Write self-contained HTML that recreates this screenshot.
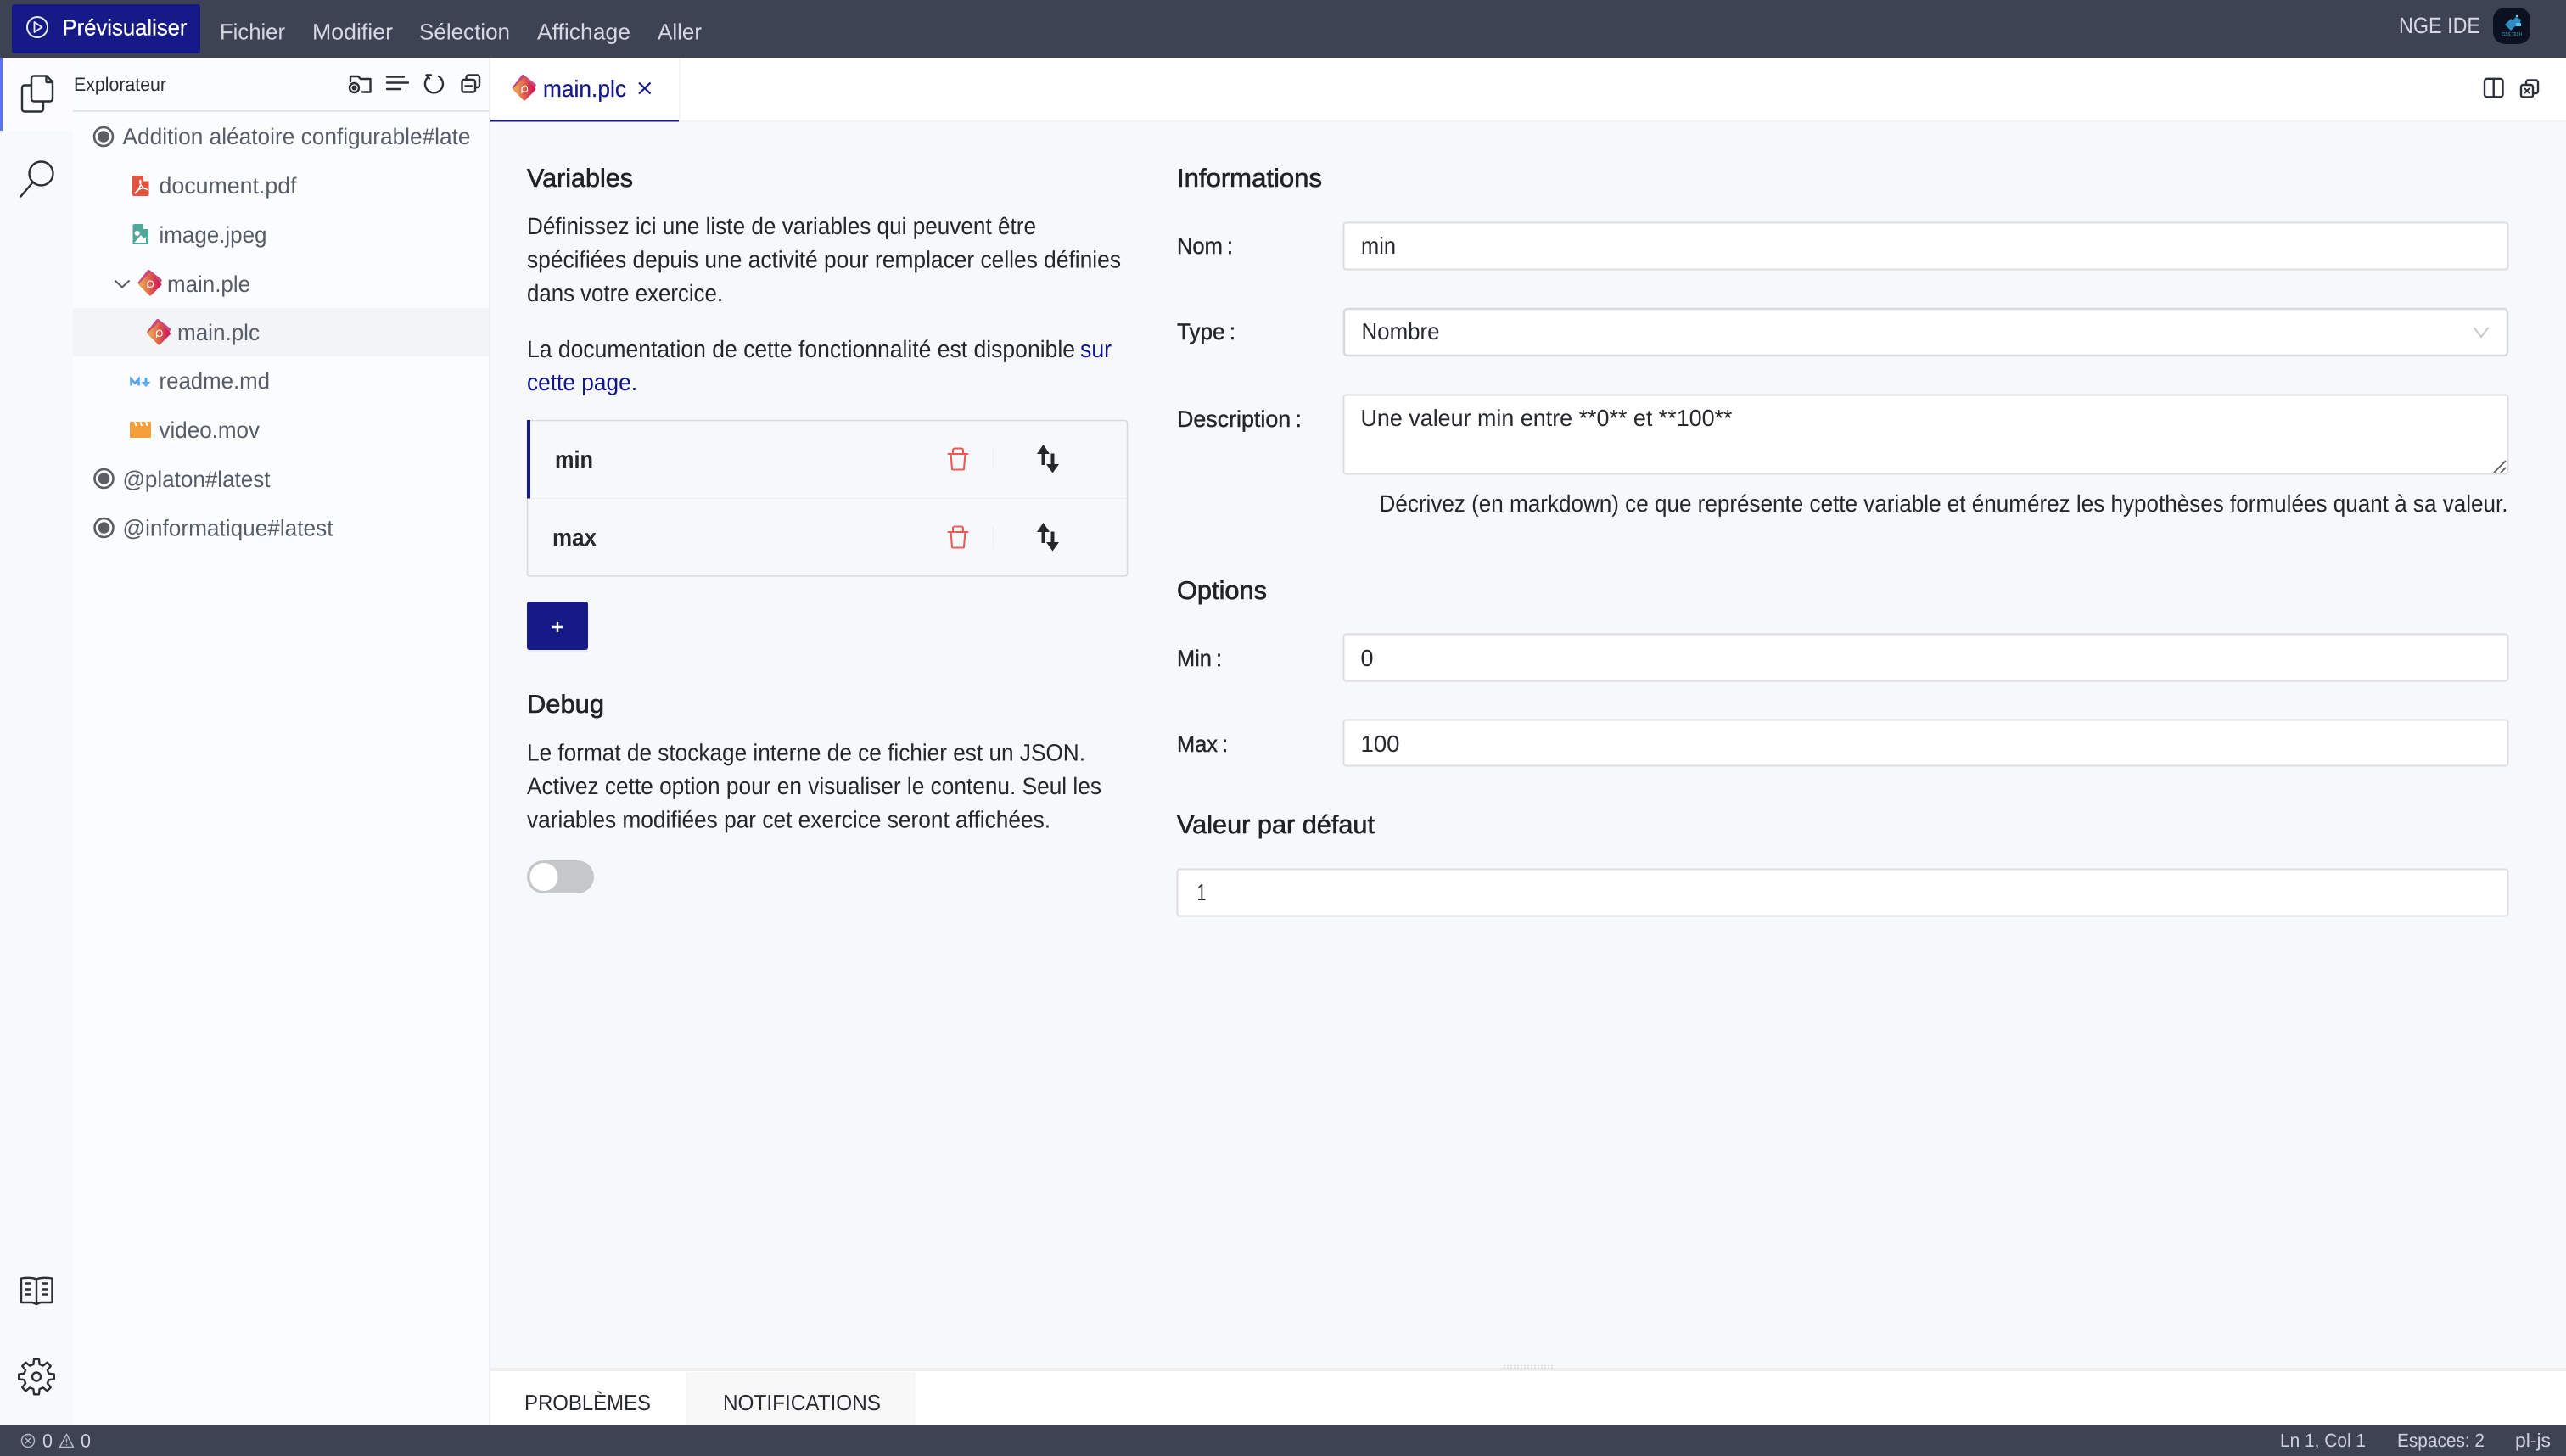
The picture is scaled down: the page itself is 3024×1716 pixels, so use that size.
<!DOCTYPE html>
<html lang="fr">
<head>
<meta charset="utf-8">
<title>NGE IDE</title>
<style>
html,body{margin:0;padding:0;width:3024px;height:1716px;overflow:hidden;background:#f7f8fa}
svg{display:block;position:absolute;left:0;top:0}
text{font-family:"Liberation Sans",sans-serif;text-rendering:geometricPrecision}
.p{font-size:28px;fill:#24272b}
.h{font-size:30px;fill:#202226;stroke:#202226;stroke-width:.6}
.l{font-size:27px;fill:#24272b;stroke:#24272b;stroke-width:.45}
.v{font-size:27.5px;fill:#25282c}
.t{font-size:27px;fill:#565d69}
.m{font-size:26.5px;fill:#d5d8e2}
.s{font-size:22px;fill:#ced2de}
.ic{fill:none;stroke:#2b2f36;stroke-width:2.4;stroke-linecap:round;stroke-linejoin:round}
.f{fill:#fff;stroke:#dcdde0;stroke-width:2}
</style>
</head>
<body>
<svg width="3024" height="1716" viewBox="0 0 3024 1716" xmlns="http://www.w3.org/2000/svg">
<defs>
<linearGradient id="g" x1="0" y1="0" x2="1" y2="0" gradientTransform="rotate(-45 .5 .5)"><stop offset="0" stop-color="#eaa04e"/><stop offset=".5" stop-color="#e0604c"/><stop offset="1" stop-color="#d21f55"/></linearGradient>
<g id="plc">
<rect x="-10.5" y="-10.5" width="21" height="21" rx="2" fill="#c9497a" transform="rotate(38) translate(-1.5,-1.5)"/>
<rect x="-10" y="-10" width="20" height="20" rx="2" fill="url(#g)" transform="rotate(45) translate(.8,.8)"/>
<path d="M-3 5.500V-1.500M-3 2.500c1 2.500 6 2.500 6.500 -.5c.6 -3 -1 -5 -3.200 -5c-1.800 0 -2.800 1.300 -2.800 2.800" fill="none" stroke="#fff" stroke-width="1.100" stroke-linecap="round"/>
</g>
<g id="radio"><circle r="11" fill="none" stroke="#5b5e63" stroke-width="2.6"/><circle r="6.8" fill="#5b5e63"/></g>
<g id="trash" fill="none" stroke="#ef5a58" stroke-width="2.1" stroke-linejoin="round" stroke-linecap="round">
<path d="M1117.500 535h23M1123 535v-4.500a2 2 0 0 1 2-2h8a2 2 0 0 1 2 2v4.500M1120.500 535l1.500 17.500a1 1 0 0 0 1 1h12a1 1 0 0 0 1-1l1.500-17.500"/>
</g>
<g id="arrows" fill="#24272b">
<path d="M1222 535L1229.500 524L1237 535H1231.500V548H1227.500V535Z"/>
<path d="M1233 547H1238.500V534.500H1242.500V547H1248L1240.500 557.500Z"/>
</g>
</defs>

<!-- base -->
<rect width="3024" height="1716" fill="#f7f8fa"/>

<!-- top bar -->
<rect width="3024" height="68" fill="#3e4354"/>
<rect x="14" y="5" width="222" height="58" rx="3" fill="#161a86"/>
<circle cx="44" cy="32" r="12" fill="none" stroke="#e8e9f6" stroke-width="2"/>
<path d="M40.500 26L49.500 32L40.500 38Z" fill="none" stroke="#e8e9f6" stroke-width="1.900" stroke-linejoin="round"/>
<text x="73.500" y="41.500" font-size="26.500" fill="#fff" stroke="#fff" stroke-width=".3" textLength="147" lengthAdjust="spacingAndGlyphs">Prévisualiser</text>
<text class="m" x="259" y="46.500" textLength="77" lengthAdjust="spacingAndGlyphs">Fichier</text>
<text class="m" x="368" y="46.500" textLength="95" lengthAdjust="spacingAndGlyphs">Modifier</text>
<text class="m" x="494" y="46.500" textLength="107" lengthAdjust="spacingAndGlyphs">Sélection</text>
<text class="m" x="633" y="46.500" textLength="110" lengthAdjust="spacingAndGlyphs">Affichage</text>
<text class="m" x="775" y="46.500" textLength="52" lengthAdjust="spacingAndGlyphs">Aller</text>
<text class="m" x="2827" y="39" textLength="96" lengthAdjust="spacingAndGlyphs">NGE IDE</text>
<rect x="2938" y="9" width="44" height="43" rx="14" fill="#0b1120"/>
<path d="M2952 29l7-7 7 7-7 7zM2960 25l5-5 6 3-2 7-5 1z" fill="#2f8fc4"/>
<path d="M2965 27h6v4h-6z" fill="#55c6e6"/><circle cx="2966" cy="19" r="1.200" fill="#6fd8ef"/>
<text x="2948" y="42" font-size="5.500" fill="#3fbcd0" textLength="24" lengthAdjust="spacingAndGlyphs">CISS TECH</text>

<!-- activity bar -->
<rect x="0" y="68" width="86" height="1612" fill="#f8f9fb"/>
<rect x="0" y="68" width="86" height="86" fill="#fcfcfe"/>
<rect x="0" y="68" width="3" height="86" fill="#5a72f5"/>
<path class="ic" d="M41 89.500H55L62 96.500V116.500a3 3 0 0 1-3 3H40a3 3 0 0 1-3-3V92.500a3 3 0 0 1 3-3Z"/>
<path class="ic" d="M54.500 90V96a1 1 0 0 0 1 1H61.500" stroke-width="1.800"/>
<path class="ic" d="M36 100.500H29a3 3 0 0 0-3 3V128.500a3 3 0 0 0 3 3H48a3 3 0 0 0 3-3V120"/>
<circle class="ic" cx="48.500" cy="204.500" r="14"/>
<path class="ic" d="M38.500 215L24.500 231.500"/>
<path class="ic" d="M43 1507.500C39 1505.500 31 1505.500 25 1506.500V1535H38L43 1537L48 1535H61.500V1506.500C55 1505.500 47 1505.500 43 1507.500ZM43 1507.500V1535" stroke-width="2.300"/>
<path d="M29.500 1512.500h7M29.500 1519.500h7M29.500 1525.500h7M49 1512.500h7M49 1519.500h7M49 1525.500h7" stroke="#2b2f36" stroke-width="2.600"/>
<g transform="translate(43,1622.500)">
<path class="ic" d="M-3.630-14.550L-2.920-20.800H2.920L3.630-14.550L7.720-12.860L12.640-16.770L16.770-12.640L12.860-7.720L14.550-3.630L20.800-2.920V2.920L14.550 3.630L12.860 7.720L16.770 12.640L12.640 16.770L7.720 12.860L3.630 14.550L2.920 20.800H-2.920L-3.630 14.550L-7.720 12.860L-12.640 16.770L-16.770 12.640L-12.860 7.720L-14.550 3.630L-20.800 2.920V-2.920L-14.550-3.630L-12.860-7.720L-16.770-12.640L-12.640-16.770L-7.720-12.860Z"/>
<circle class="ic" r="5"/>
</g>

<!-- sidebar -->
<rect x="86" y="68" width="490" height="1612" fill="#fbfcfe"/>
<rect x="576" y="68" width="2" height="1612" fill="#eef0f3"/>
<rect x="86" y="130" width="490" height="2" fill="#e2e4e8"/>
<text x="87" y="107" font-size="22.500" fill="#2b2e33" textLength="109" lengthAdjust="spacingAndGlyphs">Explorateur</text>
<g class="ic" stroke-width="2">
<path d="M413 96V90h9l3 3h11.500V108.500H427"/>
<circle cx="417.500" cy="103.500" r="5.500"/><circle cx="417.500" cy="103.500" r="1.800" fill="#2b2f36"/>
<path d="M456 90.500h20M456 97.500h25M456 105h16"/>
<path d="M517 90A10.500 10.500 0 1 1 504.500 91M502.500 88.500L506 92.500"/><path d="M503 88.500h5"/>
<rect x="549.500" y="88.500" width="15.500" height="14.500" rx="2.500"/>
<rect x="544.500" y="94" width="15.500" height="14.500" rx="2.500" fill="#fbfcfe"/>
<path d="M548.500 101.500h7.500"/>
</g>

<use href="#radio" x="122" y="161"/>
<text class="t" x="144.500" y="170" textLength="410" lengthAdjust="spacingAndGlyphs">Addition aléatoire configurable#late</text>

<path d="M158 207h11l6.500 6.500V229a2 2 0 0 1-2 2H158a2 2 0 0 1-2-2V209a2 2 0 0 1 2-2Z" fill="#e6533c"/>
<path d="M169 207v6.500h6.500Z" fill="#fff"/>
<path d="M159 228C164 224 167 217 165.500 212.500C164 213 165 221 173 223C170 220 163 222 159 228Z" fill="none" stroke="#fff" stroke-width="1.500"/>
<text class="t" x="187.500" y="228" textLength="162" lengthAdjust="spacingAndGlyphs">document.pdf</text>

<path d="M158.500 264h10.500l6 6v16a2 2 0 0 1-2 2H158.500a2 2 0 0 1-2-2v-20a2 2 0 0 1 2-2Z" fill="#4fa99a"/>
<path d="M169 264v6h6Z" fill="#fff"/>
<circle cx="161.700" cy="275" r="3" fill="#fff"/>
<path d="M158.500 286L166 277L169.500 281L172 279V286Z" fill="#fff"/>
<text class="t" x="187.500" y="286" textLength="127" lengthAdjust="spacingAndGlyphs">image.jpeg</text>

<path d="M135.500 330.500L144 338.500L152.500 330.500" fill="none" stroke="#555a62" stroke-width="2"/>
<use href="#plc" x="177" y="334"/>
<text class="t" x="197" y="344" textLength="98" lengthAdjust="spacingAndGlyphs">main.ple</text>

<rect x="86" y="363" width="490" height="57" fill="#f3f4f6"/>
<use href="#plc" x="187.500" y="392"/>
<text class="t" x="209" y="401" textLength="97" lengthAdjust="spacingAndGlyphs">main.plc</text>

<path d="M154.500 454.500V446.500L159 451.500L163.500 446.500V454.500" fill="none" stroke="#5aa5f0" stroke-width="2.600"/>
<path d="M170.500 445h3v5h4l-5.500 6-5.500-6h4Z" fill="#5aa5f0"/>
<text class="t" x="187.500" y="458" textLength="130.500" lengthAdjust="spacingAndGlyphs">readme.md</text>

<path d="M154.500 497h22a1.500 1.500 0 0 1 1.500 1.500V514.500a1.500 1.500 0 0 1-1.500 1.500h-22a1.500 1.500 0 0 1-1.500-1.500V498.500a1.500 1.500 0 0 1 1.500-1.500Z" fill="#f4a03a"/>
<path d="M159 497l1.500 5M165.500 497l1.500 5M172 497l1.500 5" stroke="#fbfcfe" stroke-width="2"/>
<text class="t" x="187.500" y="516" textLength="118.500" lengthAdjust="spacingAndGlyphs">video.mov</text>

<use href="#radio" x="122.500" y="564"/>
<text class="t" x="144.500" y="574" textLength="174" lengthAdjust="spacingAndGlyphs">@platon#latest</text>
<use href="#radio" x="122.500" y="622"/>
<text class="t" x="144.500" y="631.500" textLength="248" lengthAdjust="spacingAndGlyphs">@informatique#latest</text>

<!-- tab bar -->
<rect x="578" y="68" width="2446" height="74" fill="#fff"/>
<rect x="578" y="142" width="2446" height="1.500" fill="#eff0f2"/>
<rect x="578" y="141" width="222" height="2.500" fill="#161a86"/>
<rect x="800" y="68" width="1.500" height="73" fill="#f2f3f5"/>
<use href="#plc" x="618" y="104"/>
<text x="640" y="114" font-size="27.500" fill="#161a86" stroke="#161a86" stroke-width=".25" textLength="98" lengthAdjust="spacingAndGlyphs">main.plc</text>
<path d="M753 97.500L766.500 110.500M766.500 97.500L753 110.500" stroke="#161a86" stroke-width="2.200" fill="none"/>
<g class="ic" stroke-width="2.200">
<rect x="2928" y="92.800" width="21.500" height="21.500" rx="3"/><path d="M2938.700 93V114"/>
<rect x="2977" y="94.500" width="14" height="15.500" rx="2.500"/>
<rect x="2971" y="100" width="14" height="14.500" rx="2.500" fill="#fff"/>
</g>
<path d="M2975 104l6 6M2981 104l-6 6" stroke="#2b2f36" stroke-width="2"/>

<!-- Left column -->
<text class="h" x="621" y="220" textLength="125" lengthAdjust="spacingAndGlyphs">Variables</text>
<text class="p" x="621" y="276" textLength="600" lengthAdjust="spacingAndGlyphs">Définissez ici une liste de variables qui peuvent être</text>
<text class="p" x="621" y="315.500" textLength="700" lengthAdjust="spacingAndGlyphs">spécifiées depuis une activité pour remplacer celles définies</text>
<text class="p" x="621" y="355" textLength="231" lengthAdjust="spacingAndGlyphs">dans votre exercice.</text>
<text class="p" x="621" y="421" textLength="646" lengthAdjust="spacingAndGlyphs">La documentation de cette fonctionnalité est disponible</text>
<text class="p" x="1273" y="421" style="fill:#10148a" textLength="37" lengthAdjust="spacingAndGlyphs">sur</text>
<text class="p" x="621" y="460" style="fill:#10148a" textLength="130" lengthAdjust="spacingAndGlyphs">cette page.</text>

<rect x="621.500" y="495.500" width="707" height="183.500" rx="3" fill="none" stroke="#d7d9dd" stroke-width="1.500"/>
<rect x="622" y="587" width="706" height="1" fill="#ebedf0"/>
<rect x="621" y="495" width="4" height="92.500" fill="#161a86"/>
<text x="654" y="551" font-size="28" font-weight="bold" fill="#24272b" textLength="45" lengthAdjust="spacingAndGlyphs">min</text>
<text x="651" y="643" font-size="28" font-weight="bold" fill="#24272b" textLength="52" lengthAdjust="spacingAndGlyphs">max</text>
<use href="#trash"/><use href="#trash" y="92"/>
<rect x="1170" y="528" width="1" height="26" fill="#ebedf0"/>
<rect x="1170" y="620" width="1" height="26" fill="#ebedf0"/>
<use href="#arrows"/><use href="#arrows" y="92"/>

<rect x="621" y="712" width="72" height="57" rx="3" fill="#eceef1"/>
<rect x="621" y="709" width="72" height="57" rx="3" fill="#161a86"/>
<path d="M657 733v12M651 739h12" stroke="#fff" stroke-width="2.400"/>

<text class="h" x="621" y="840" textLength="91" lengthAdjust="spacingAndGlyphs">Debug</text>
<text class="p" x="621" y="896.500" textLength="658" lengthAdjust="spacingAndGlyphs">Le format de stockage interne de ce fichier est un JSON.</text>
<text class="p" x="621" y="936" textLength="677" lengthAdjust="spacingAndGlyphs">Activez cette option pour en visualiser le contenu. Seul les</text>
<text class="p" x="621" y="975.500" textLength="617" lengthAdjust="spacingAndGlyphs">variables modifiées par cet exercice seront affichées.</text>
<rect x="621" y="1014" width="79" height="39" rx="19.500" fill="#c6c7c9"/>
<circle cx="641" cy="1033.500" r="16.500" fill="#fff"/>

<!-- Right column -->
<text class="h" x="1387" y="220" textLength="171" lengthAdjust="spacingAndGlyphs">Informations</text>

<text class="l" x="1387" y="299" textLength="66" lengthAdjust="spacingAndGlyphs">Nom&#8201;:</text>
<rect class="f" x="1583.500" y="262.500" width="1372" height="55" rx="3"/>
<text class="v" x="1604" y="299" textLength="41" lengthAdjust="spacingAndGlyphs">min</text>

<text class="l" x="1387" y="400" textLength="69" lengthAdjust="spacingAndGlyphs">Type&#8201;:</text>
<rect x="1584" y="364" width="1371" height="55" rx="4" fill="#fff" stroke="#d8d9dc" stroke-width="2.500"/>
<text class="v" x="1604.500" y="400" textLength="92" lengthAdjust="spacingAndGlyphs">Nombre</text>
<path d="M2915.500 386L2924 397L2932.500 386" fill="none" stroke="#c8c9cc" stroke-width="2"/>

<text class="l" x="1387" y="503" textLength="147" lengthAdjust="spacingAndGlyphs">Description&#8201;:</text>
<rect class="f" x="1583.500" y="465.500" width="1372" height="93" rx="3"/>
<text class="v" x="1603.500" y="502" textLength="438" lengthAdjust="spacingAndGlyphs">Une valeur min entre **0** et **100**</text>
<path d="M2939 557L2953 543M2947 557L2953 551" stroke="#5c5c5c" stroke-width="1.800" fill="none"/>
<text class="p" x="1625.500" y="603" textLength="1330" lengthAdjust="spacingAndGlyphs">Décrivez (en markdown) ce que représente cette variable et énumérez les hypothèses formulées quant à sa valeur.</text>

<text class="h" x="1387" y="706" textLength="106" lengthAdjust="spacingAndGlyphs">Options</text>
<text class="l" x="1387" y="785" textLength="53" lengthAdjust="spacingAndGlyphs">Min&#8201;:</text>
<rect class="f" x="1583.500" y="747.500" width="1372" height="55" rx="3"/>
<text class="v" x="1603.500" y="785" textLength="15" lengthAdjust="spacingAndGlyphs">0</text>
<text class="l" x="1387" y="886" textLength="60" lengthAdjust="spacingAndGlyphs">Max&#8201;:</text>
<rect class="f" x="1583.500" y="848.500" width="1372" height="54" rx="3"/>
<text class="v" x="1603.500" y="886" textLength="46" lengthAdjust="spacingAndGlyphs">100</text>

<text class="h" x="1387" y="982" textLength="233" lengthAdjust="spacingAndGlyphs">Valeur par défaut</text>
<rect class="f" x="1387.500" y="1024.500" width="1568" height="55" rx="3"/>
<text class="v" x="1410.500" y="1061" textLength="11" lengthAdjust="spacingAndGlyphs">1</text>

<!-- bottom panel -->
<rect x="578" y="1612" width="2446" height="4" fill="#eeeeef"/>
<path d="M1772 1609.500H1830M1772 1612H1830" stroke="#cfd0d3" stroke-width="1" stroke-dasharray="2 2"/>
<rect x="578" y="1616" width="2446" height="64" fill="#fff"/>
<rect x="808" y="1616" width="3" height="64" fill="#f6f6f7"/>
<rect x="811" y="1617" width="268" height="63" rx="2" fill="#f8f8f8"/>
<text x="618" y="1662" font-size="26" fill="#26292e" textLength="149" lengthAdjust="spacingAndGlyphs">PROBLÈMES</text>
<text x="852" y="1662" font-size="26" fill="#26292e" textLength="186" lengthAdjust="spacingAndGlyphs">NOTIFICATIONS</text>

<!-- status bar -->
<rect y="1680" width="3024" height="36" fill="#3e4354"/>
<circle cx="33" cy="1698" r="7.500" fill="none" stroke="#b9bdc9" stroke-width="1.400"/>
<path d="M30 1695l6 6M36 1695l-6 6" stroke="#b9bdc9" stroke-width="1.300"/>
<text class="s" x="50" y="1705.500" textLength="12" lengthAdjust="spacingAndGlyphs">0</text>
<path d="M78.500 1690.500L86.500 1705.500H70.500Z" fill="none" stroke="#b9bdc9" stroke-width="1.400" stroke-linejoin="round"/>
<path d="M78.500 1695.500v5M78.500 1702v1.500" stroke="#b9bdc9" stroke-width="1.300"/>
<text class="s" x="95" y="1705.500" textLength="12" lengthAdjust="spacingAndGlyphs">0</text>
<text class="s" x="2687" y="1705" textLength="101" lengthAdjust="spacingAndGlyphs">Ln 1, Col 1</text>
<text class="s" x="2825" y="1705" textLength="103" lengthAdjust="spacingAndGlyphs">Espaces: 2</text>
<text class="s" x="2964" y="1705" textLength="42" lengthAdjust="spacingAndGlyphs">pl-js</text>
</svg>
</body>
</html>
